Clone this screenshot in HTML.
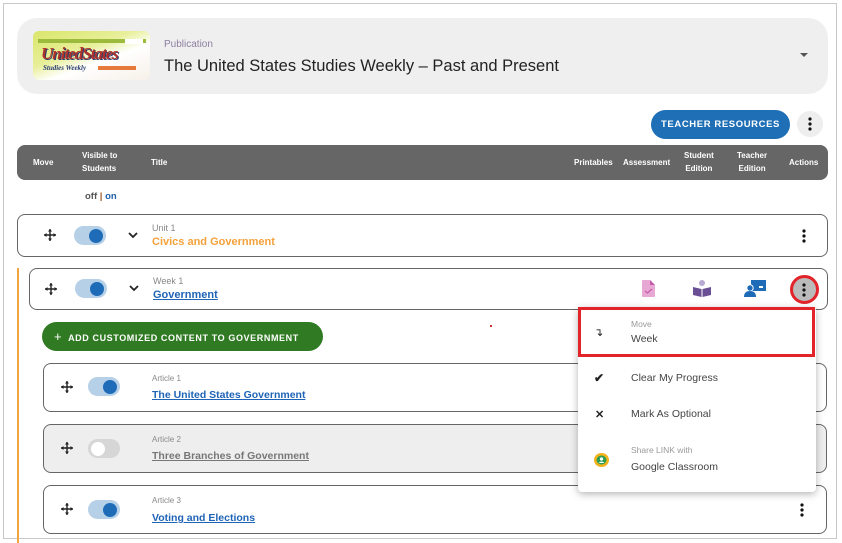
<!DOCTYPE html>
<html><head><meta charset="utf-8">
<style>
*{box-sizing:border-box;margin:0;padding:0}
body{width:842px;height:543px;background:#fff;font-family:"Liberation Sans",sans-serif;position:relative;overflow:hidden;color:#222}
.a{position:absolute}
.frame{left:3px;top:3px;width:834px;height:536px;border:1px solid #c8c8c8}
.row{position:absolute;border:1px solid #666;border-radius:8px;background:#fff}
.tog{position:absolute;width:32px;height:19px;border-radius:10px;background:#b6d0e8}
.tog::after{content:"";position:absolute;right:3px;top:2.5px;width:14px;height:14px;border-radius:50%;background:#1e6cb8}
.tog.off{background:#d6d6d6}
.tog.off::after{left:3px;right:auto;background:#fff}
.sm{font-size:8px;color:#888}
.ttl{font-size:10.5px;font-weight:bold;color:#1e63b6;text-decoration:underline}
.kb{position:absolute;width:4px;height:14px}
.th{position:absolute;color:#fff;font-size:8px;font-weight:bold;text-align:center;line-height:13px}
.mi{position:absolute;left:631px;font-size:10.5px;color:#444}
</style></head><body>
<svg width="0" height="0" style="position:absolute"><defs>
<g id="mv"><path d="M6 0V12M0 6H12" stroke="#222" stroke-width="1.4" fill="none"/><path d="M6 0L4 2.5H8Z M6 12L4 9.5H8Z M0 6L2.5 4V8Z M12 6L9.5 4V8Z" fill="#222"/></g>
<g id="ch"><path d="M1 1L5 5L9 1" stroke="#222" stroke-width="1.8" fill="none"/></g>
<g id="kb"><circle cx="2" cy="2" r="1.6" fill="#111"/><circle cx="2" cy="7" r="1.6" fill="#111"/><circle cx="2" cy="12" r="1.6" fill="#111"/></g>
</defs></svg>
<div class="a frame"></div>
<div class="a" style="left:17px;top:268px;width:2px;height:275px;background:#f0a53e"></div>

<div class="a" style="left:17px;top:18px;width:811px;height:76px;background:#efefef;border-radius:20px"></div>
<div class="a" style="left:33px;top:31px;width:117px;height:49px;border-radius:6px;background:linear-gradient(160deg,#d9e66a 0%,#e8ef9a 40%,#fff 60%,#f6f0e8 100%);overflow:hidden">
 <div class="a" style="left:5px;top:8px;width:108px;height:4px;background:#9cbb3d"></div>
 <div class="a" style="left:92px;top:8px;width:18px;height:5px;background:#fff"></div>
 <div class="a" style="left:8px;top:13px;font:italic bold 17px 'Liberation Serif',serif;color:#b0332b;letter-spacing:-1px;text-shadow:1px 1px 0 #2a3b6b">UnitedStates</div>
 <div class="a" style="left:10px;top:33px;font:italic bold 7px 'Liberation Serif',serif;color:#2a3b6b">Studies Weekly</div>
 <div class="a" style="left:65px;top:35px;width:38px;height:4px;background:#e57a3a"></div>
</div>
<div class="a" style="left:164px;top:39px;font-size:10px;color:#8c7fa0">Publication</div>
<div class="a" style="left:164px;top:57px;font-size:16.5px;color:#222">The United States Studies Weekly – Past and Present</div>
<svg class="a" style="left:800px;top:53px" width="8" height="5"><path d="M0 0L8 0L4 4Z" fill="#555"/></svg>

<div class="a" style="left:651px;top:110px;width:139px;height:29px;border-radius:15px;background:#1f6fb6;color:#fff;font-size:9.5px;font-weight:bold;letter-spacing:.6px;text-align:center;line-height:29px">TEACHER RESOURCES</div>
<div class="a" style="left:797px;top:111px;width:26px;height:26px;border-radius:50%;background:#eee"></div>
<svg class="kb" style="left:808px;top:117px"><use href="#kb"/></svg>

<div class="a" style="left:17px;top:145px;width:811px;height:35px;background:#666;border-radius:8px"></div>
<div class="th" style="left:33px;top:156px">Move</div>
<div class="th" style="left:82px;top:149px;text-align:left">Visible to<br>Students</div>
<div class="th" style="left:151px;top:156px">Title</div>
<div class="th" style="left:574px;top:156px">Printables</div>
<div class="th" style="left:623px;top:156px">Assessment</div>
<div class="th" style="left:684px;top:149px">Student<br>Edition</div>
<div class="th" style="left:737px;top:149px">Teacher<br>Edition</div>
<div class="th" style="left:789px;top:156px">Actions</div>
<div class="a" style="left:85px;top:191px;font-size:9.5px;font-weight:bold;color:#555">off <span style="color:#a05a2c">|</span> <span style="color:#1e5fa8">on</span></div>

<div class="row" style="left:17px;top:214px;width:811px;height:43px"></div>
<svg class="a" style="left:44px;top:229px" width="12" height="12"><use href="#mv"/></svg>
<div class="tog" style="left:74px;top:226px"></div>
<svg class="a" style="left:128px;top:232px" width="10" height="7"><use href="#ch"/></svg>
<div class="a sm" style="left:152px;top:223px;font-size:9px">Unit 1</div>
<div class="a" style="left:152px;top:236px;font-size:11px;font-weight:bold;color:#f4a13a">Civics and Government</div>
<svg class="kb" style="left:802px;top:229px"><use href="#kb"/></svg>

<div class="row" style="left:29px;top:268px;width:799px;height:42px"></div>
<svg class="a" style="left:45px;top:283px" width="12" height="12"><use href="#mv"/></svg>
<div class="tog" style="left:75px;top:279px"></div>
<svg class="a" style="left:129px;top:285px" width="10" height="7"><use href="#ch"/></svg>
<div class="a sm" style="left:153px;top:276px;font-size:9px">Week 1</div>
<div class="a ttl" style="left:153px;top:289px;font-size:11px">Government</div>
<svg class="a" style="left:642px;top:280px" width="13" height="17"><path d="M0 1Q0 0 1 0H8L13 5V16Q13 17 12 17H1Q0 17 0 16Z" fill="#e7a8d4"/><path d="M8 0V5H13Z" fill="#c75aa8"/><path d="M3 11L5.5 13L10 9" stroke="#c75aa8" stroke-width="1.2" fill="none"/></svg>
<svg class="a" style="left:693px;top:280px" width="18" height="17"><circle cx="9" cy="3" r="3" fill="#b7a9cf"/><path d="M0 7L8.5 9V17L0 15Z M18 7L9.5 9V17L18 15Z" fill="#6a4f94"/></svg>
<svg class="a" style="left:744px;top:280px" width="22" height="17"><rect x="7" y="0" width="15" height="11" fill="#1e6cb8"/><rect x="15" y="6" width="4" height="2" fill="#fff"/><circle cx="6" cy="8" r="3.2" fill="#1e6cb8" stroke="#fff" stroke-width="1"/><path d="M0 17Q0 11 6 11Q12 11 12 17Z" fill="#1e6cb8"/></svg>
<div class="a" style="left:790px;top:275px;width:29px;height:29px;border-radius:50%;border:3px solid #e3232a;background:#bbb"></div>
<svg class="kb" style="left:802px;top:283px"><use href="#kb"/></svg>

<div class="a" style="left:42px;top:322px;width:281px;height:29px;border-radius:15px;background:#2f7a22;color:#fff;font-size:9px;font-weight:bold;letter-spacing:.6px;line-height:29px;padding-left:12px;white-space:nowrap"><span style="font-size:13px;font-weight:normal">+</span>&nbsp; ADD CUSTOMIZED CONTENT TO <b style="font-weight:900">GOVERNMENT</b></div>
<div class="a" style="left:490px;top:325px;width:2px;height:2px;background:#c33"></div>

<div class="row" style="left:43px;top:363px;width:784px;height:49px"></div>
<svg class="a" style="left:61px;top:381px" width="12" height="12"><use href="#mv"/></svg>
<div class="tog" style="left:88px;top:377px"></div>
<div class="a sm" style="left:152px;top:374px">Article 1</div>
<div class="a ttl" style="left:152px;top:389px">The United States Government</div>

<div class="row" style="left:43px;top:424px;width:784px;height:49px;background:#eee"></div>
<svg class="a" style="left:61px;top:442px" width="12" height="12"><use href="#mv"/></svg>
<div class="tog off" style="left:88px;top:439px"></div>
<div class="a sm" style="left:152px;top:435px">Article 2</div>
<div class="a ttl" style="left:152px;top:450px;color:#777">Three Branches of Government</div>

<div class="row" style="left:43px;top:485px;width:784px;height:49px"></div>
<svg class="a" style="left:61px;top:503px" width="12" height="12"><use href="#mv"/></svg>
<div class="tog" style="left:88px;top:500px"></div>
<div class="a sm" style="left:152px;top:496px">Article 3</div>
<div class="a ttl" style="left:152px;top:512px">Voting and Elections</div>
<svg class="kb" style="left:800px;top:503px"><use href="#kb"/></svg>

<div class="a" style="left:578px;top:307px;width:238px;height:185px;background:#fff;border-radius:4px;box-shadow:0 2px 8px rgba(0,0,0,.3)"></div>
<div class="a" style="left:578px;top:307px;width:237px;height:50px;border:3px solid #e3232a"></div>
<div class="a" style="left:594px;top:326px;font-size:11px;color:#222">↴</div>
<div class="mi" style="top:319px;font-size:8.5px;color:#999">Move</div>
<div class="mi" style="top:333px">Week</div>
<div class="a" style="left:594px;top:371px;font-size:12px;font-weight:bold">✔</div>
<div class="mi" style="top:372px">Clear My Progress</div>
<div class="a" style="left:595px;top:408px;font-size:11px;font-weight:bold">✕</div>
<div class="mi" style="top:408px">Mark As Optional</div>
<svg class="a" style="left:594px;top:453px" width="15" height="14"><ellipse cx="7.5" cy="7" rx="7.5" ry="7" fill="#f2b21b"/><ellipse cx="7.5" cy="7" rx="5" ry="4.5" fill="#2e9e55"/><circle cx="7.5" cy="6" r="1.6" fill="#fff"/><path d="M4.5 10Q7.5 7 10.5 10Z" fill="#fff"/></svg>
<div class="mi" style="top:445px;font-size:8.5px;color:#999">Share LINK with</div>
<div class="mi" style="top:461px">Google Classroom</div>
</body></html>
